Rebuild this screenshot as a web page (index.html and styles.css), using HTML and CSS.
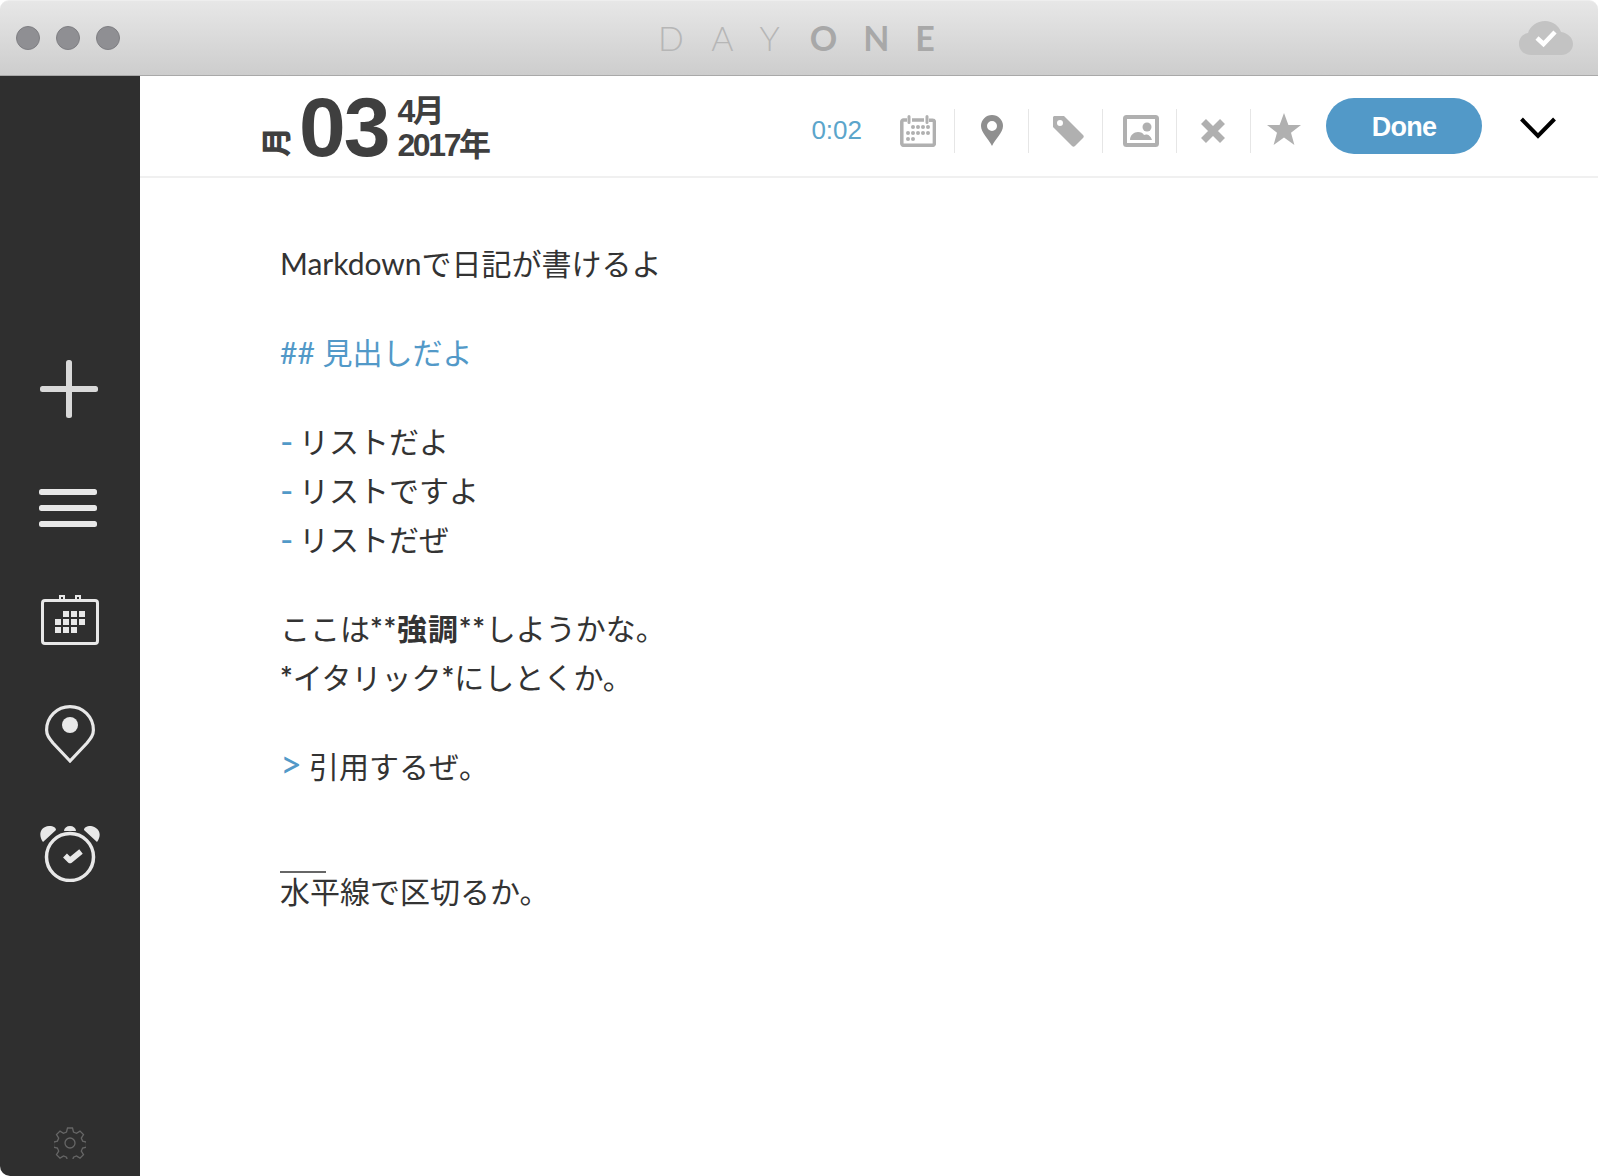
FILE: index.html
```html
<!DOCTYPE html>
<html lang="ja">
<head>
    <meta charset="UTF-8">
    <meta name="viewport" content="width=device-width, initial-scale=1.0">
    <title>Day One</title>
    <link rel="stylesheet" href="styles.css">
</head>
<body>
    <div class="window">
        <header class="titlebar">
            <div class="lights">
                <span class="light"></span>
                <span class="light"></span>
                <span class="light"></span>
            </div>
            <div class="brand"><span>DAY</span><strong>ONE</strong></div>
            <div class="sync">
                <svg width="54" height="34" viewBox="0 0 54 34">
                    <path fill="#c3c3c3" d="M12 34C5 34 0 29 0 23c0-6 4-10 9-11C11 5 18 0 26 0c8 0 14 5 16 11 7 1 12 6 12 12 0 6-5 11-12 11z"/>
                    <path fill="none" stroke="#fff" stroke-width="4.500" d="M18 17l6.500 6L36 11"/>
                </svg>
            </div>
        </header>
        <div class="body">
            <nav class="sidebar">
                <svg class="side-icon icon-plus" width="58" height="58" viewBox="0 0 58 58">
                    <rect x="0" y="26" width="58" height="6" rx="2.500" fill="#d9d9d9"/>
                    <rect x="26" y="0" width="6" height="58" rx="2.500" fill="#d9d9d9"/>
                </svg>
                <svg class="side-icon icon-menu" width="58" height="38" viewBox="0 0 58 38">
                    <rect y="0" width="58" height="6" rx="2.500" fill="#e8e8e8"/>
                    <rect y="16" width="58" height="6" rx="2.500" fill="#e8e8e8"/>
                    <rect y="32" width="58" height="6" rx="2.500" fill="#e8e8e8"/>
                </svg>
                <svg class="side-icon icon-cal" width="58" height="50" viewBox="0 0 58 50">
                    <rect x="1.500" y="5.500" width="55" height="43" rx="2.500" fill="none" stroke="#e8e8e8" stroke-width="3"/>
                    <path fill="none" stroke="#e8e8e8" stroke-width="2" d="M19 5V1h4v4M35 5V1h4v4"/>
                    <path fill="#e8e8e8" d="M22 16h6v6h-6zM30 16h6v6h-6zM38 16h6v6h-6zM14 24h6v6h-6zM22 24h6v6h-6zM30 24h6v6h-6zM38 24h6v6h-6zM14 32h6v6h-6zM22 32h6v6h-6zM30 32h6v6h-6z"/>
                </svg>
                <svg class="side-icon icon-pin" width="50" height="58" viewBox="0 0 50 58">
                    <path fill="none" stroke="#e8e8e8" stroke-width="3.200" d="M25 56L8 38C4 33 1.600 30 1.600 25a23.400 23.400 0 0 1 46.800 0c0 5-2.400 8-6.400 13z"/>
                    <circle cx="25" cy="20" r="8" fill="#e8e8e8"/>
                </svg>
                <svg class="side-icon icon-alarm" width="60" height="56" viewBox="0 0 60 56">
                    <circle cx="30" cy="31" r="23.500" fill="none" stroke="#e8e8e8" stroke-width="3.500"/>
                    <path fill="#e8e8e8" d="M24 5a6 5 0 0 1 12 0zM3 16C-2 9 0 1 9 0c5 0 7 2 7 4zM57 16c5-7 3-14-6-16-5 0-7 2-7 4z"/>
                    <path fill="none" stroke="#e8e8e8" stroke-width="5.500" stroke-linejoin="round" d="M25 29.500l5 5 11-9"/>
                </svg>
                <svg class="side-icon icon-gear" width="32" height="32" viewBox="0 0 32 32">
                    <path fill="none" stroke="#666" stroke-width="1.300" d="M13.500 1h5l1 4 3 1.300 3.500-2.200 3.500 3.500-2.200 3.500 1.300 3 3.900 1v5l-3.900 1-1.300 3 2.200 3.500-3.500 3.500-3.500-2.200-3 1.300-1 3.300h-5l-1-3.300-3-1.300-3.500 2.200-3.500-3.500 2.200-3.500-1.300-3-3.900-1v-5l3.900-1 1.300-3-2.200-3.500 3.500-3.500 3.500 2.200 3-1.300z"/>
                    <circle cx="16" cy="16" r="5" fill="none" stroke="#666" stroke-width="1.300"/>
                </svg>
            </nav>
            <main class="main">
                <div class="toolbar">
                    <div class="date">
                        <span class="weekday">月</span>
                        <span class="day">03</span>
                        <span class="month-year">4月<br>2017年</span>
                    </div>
                    <div class="tools">
                        <span class="timer">0:02</span>
                        <div class="tool">
                            <svg width="36" height="32" viewBox="0 0 36 32">
                                <path fill="none" stroke="#b0b0b0" stroke-width="3.500" d="M7 5H3.500A1.800 1.800 0 0 0 1.800 7v21.500a1.800 1.800 0 0 0 1.800 1.800h29a1.800 1.800 0 0 0 1.800-1.800V7a1.800 1.800 0 0 0-1.800-1.800H29M12 5h12"/>
                                <path fill="none" stroke="#b0b0b0" stroke-width="3" stroke-linecap="round" d="M9 1.500v6M27 1.500v6"/>
                                <g fill="#b0b0b0">
                                    <circle cx="13" cy="12" r="2"/><circle cx="18" cy="12" r="2"/><circle cx="23" cy="12" r="2"/><circle cx="28" cy="12" r="2"/>
                                    <circle cx="8" cy="18" r="2"/><circle cx="13" cy="18" r="2"/><circle cx="18" cy="18" r="2"/><circle cx="23" cy="18" r="2"/><circle cx="28" cy="18" r="2"/>
                                    <circle cx="8" cy="24" r="2"/><circle cx="13" cy="24" r="2"/>
                                </g>
                            </svg>
                        </div>
                        <div class="tool tool-pin">
                            <svg width="24" height="32" viewBox="0 0 24 32">
                                <path fill="#8f8f8f" fill-rule="evenodd" d="M12 31C9 24 1 18 1 11a11 11 0 0 1 22 0c0 7-8 13-11 20zM12 6a5 5 0 1 0 0 10 5 5 0 0 0 0-10z"/>
                            </svg>
                        </div>
                        <div class="tool tool-tag">
                            <svg width="32" height="32" viewBox="0 0 32 32">
                                <path fill="#b0b0b0" fill-rule="evenodd" d="M2 1h10l19 19c1 1 1 2 0 3l-8 8c-1 1-2 1-3 0L1 12V2zM8 5a3 3 0 1 0 0 6 3 3 0 0 0 0-6z"/>
                            </svg>
                        </div>
                        <div class="tool tool-photo">
                            <svg width="36" height="32" viewBox="0 0 36 32">
                                <rect x="2" y="2" width="32" height="28" rx="1.500" fill="none" stroke="#b0b0b0" stroke-width="4"/>
                                <circle cx="24" cy="12" r="4.500" fill="#b0b0b0"/>
                                <path fill="#b0b0b0" d="M7 25c0-5 4-8 8-8 3 0 5 1 6 3 2-1 6-1 8 5z"/>
                            </svg>
                        </div>
                        <div class="tool tool-close">
                            <svg width="26" height="26" viewBox="0 0 26 26">
                                <path fill="none" stroke="#b0b0b0" stroke-width="7" d="M3.500 3.500l19 19M22.500 3.500l-19 19"/>
                            </svg>
                        </div>
                        <div class="tool tool-last">
                            <svg width="34" height="32" viewBox="0 0 34 32">
                                <path fill="#b0b0b0" d="M17 0l4.400 12H34l-10 7.700L27.400 32 17 24.500 6.600 32 10 19.700 0 12h12.600z"/>
                            </svg>
                        </div>
                        <button class="done">Done</button>
                        <svg class="chevron" width="36" height="22" viewBox="0 0 36 22">
                            <path fill="none" stroke="#000" stroke-width="4" d="M1.500 2L18 19 34.500 2"/>
                        </svg>
                    </div>
                </div>
                <article class="entry">
                    <p>Markdownで日記が書けるよ</p>
                    <p class="mark">## 見出しだよ</p>
                    <p>
                        <span class="line"><span class="mark dash">-</span>リストだよ</span>
                        <span class="line"><span class="mark dash">-</span>リストですよ</span>
                        <span class="line"><span class="mark dash">-</span>リストだぜ</span>
                    </p>
                    <p>
                        <span class="line">ここは<b>**強調**</b>しようかな。</span>
                        <span class="line"><span class="star">*</span>イタリック<span class="star">*</span>にしとくか。</span>
                    </p>
                    <p><span class="mark quote">&gt;</span>引用するぜ。</p>
                    <hr class="rule">
                    <p class="after-rule">水平線で区切るか。</p>
                </article>
            </main>
        </div>
    </div>
</body>
</html>
```

FILE: styles.css
```css
* {
    box-sizing: border-box;
}
html, body {
    margin: 0;
    padding: 0;
    height: 100%;
    background-color: #fff;
    overflow: hidden;
}
body {
    font-family: 'Lato', 'Noto Sans CJK JP', sans-serif;
    color: #333;
}
.window {
    display: flex;
    flex-direction: column;
    height: 1176px;
}

/* title bar */
.titlebar {
    display: grid;
    grid-template-columns: 1fr auto 1fr;
    align-items: center;
    height: 76px;
    flex: none;
    padding: 0 25px 0 16px;
    background: linear-gradient(#e7e7e7, #cdcdcd);
    border-top: 1px solid #eee;
    border-bottom: 1px solid #a9a9a9;
    border-radius: 9px 9px 0 0;
}
.lights {
    display: flex;
    gap: 16px;
}
.light {
    width: 24px;
    height: 24px;
    border-radius: 50%;
    background-color: #8f8f93;
    border: 1px solid #7f7f83;
}
.brand {
    font-size: 34px;
    line-height: 1;
    letter-spacing: 28px;
    margin-right: -30px;
    color: #b6b6b6;
    font-weight: 300;
    white-space: nowrap;
}
.brand strong {
    margin-left: 2px;
    letter-spacing: 26px;
    font-weight: 700;
    color: #a8a8a8;
}
.sync {
    display: flex;
    justify-content: flex-end;
}

/* sidebar */
.body {
    display: flex;
    flex: 1;
    min-height: 0;
}
.sidebar {
    display: flex;
    flex-direction: column;
    align-items: center;
    width: 140px;
    flex: none;
    padding-top: 284px;
    padding-bottom: 17px;
    background-color: #2f2f2f;
    border-radius: 0 0 0 10px;
}
.side-icon {
    display: block;
    flex: none;
}
.icon-plus {
    margin-left: -2px;
}
.icon-menu {
    margin-top: 71px;
    margin-left: -4px;
}
.icon-cal {
    margin-top: 68px;
}
.icon-pin {
    margin-top: 60px;
}
.icon-alarm {
    margin-top: 63px;
}
.icon-gear {
    margin-top: auto;
}

/* date + tools row */
.main {
    flex: 1;
    min-width: 0;
}
.toolbar {
    display: flex;
    align-items: center;
    justify-content: space-between;
    height: 102px;
    padding: 0 42px 0 122px;
    border-bottom: 2px solid #f0f0f0;
}
.date {
    display: flex;
    align-items: flex-end;
    font-family: 'Liberation Sans', 'Noto Sans CJK JP', sans-serif;
    font-weight: 700;
    color: #3f3f3f;
}
.weekday {
    width: 30px;
    font-size: 30px;
    line-height: 30px;
    font-weight: 900;
    transform: rotate(-90deg);
    margin-bottom: 12px;
}
.day {
    font-size: 84px;
    line-height: 84px;
    letter-spacing: -2px;
    margin-left: 7px;
    margin-top: 2px;
}
.month-year {
    font-size: 32px;
    line-height: 34px;
    letter-spacing: -2.4px;
    margin-left: 9px;
    margin-bottom: 7px;
}
.tools {
    display: flex;
    align-items: center;
}
.timer {
    font-family: 'Liberation Sans', sans-serif;
    font-size: 26px;
    color: #5ba5cb;
    margin-top: 8px;
    margin-right: 19px;
}
.tool {
    display: flex;
    align-items: center;
    justify-content: center;
    width: 74px;
    height: 44px;
    margin-top: 10px;
    border-right: 1px solid #e6e6e6;
}
.tool-pin svg {
    margin-left: 1px;
}
.tool-tag svg {
    margin-left: 5px;
}
.tool-photo svg {
    margin-left: 3px;
}
.tool-close svg {
    margin-right: 2px;
}
.tool-last {
    border-right: none;
}
.tool-last svg {
    margin-right: 8px;
    margin-bottom: 4px;
}
.done {
    width: 156px;
    height: 56px;
    margin-left: 1px;
    padding: 2px 0 0;
    font-family: 'Liberation Sans', sans-serif;
    font-size: 27px;
    letter-spacing: -0.8px;
    font-weight: 700;
    color: #fff;
    background-color: #5299c8;
    border: none;
    border-radius: 28px;
}
.chevron {
    margin-left: 38px;
    margin-top: 4px;
}

/* entry text */
.entry {
    padding: 61px 0 0 140px;
    font-size: 30px;
    line-height: 49px;
}
.entry p {
    margin: 0 0 40px;
}
.entry b {
    letter-spacing: 0.8px;
}
.line {
    display: block;
}
.star {
    font-weight: 700;
}
.entry .mark {
    color: #5299c8;
}
.dash {
    display: inline-block;
    width: 19px;
    font-size: 36px;
    line-height: 0;
    vertical-align: -2px;
}
.quote {
    display: inline-block;
    width: 29px;
    font-size: 38px;
    line-height: 0;
}
.rule {
    width: 46px;
    height: 2px;
    margin: 80px 0 0;
    border: none;
    background-color: #666;
}
.entry .after-rule {
    line-height: 36px;
}
```
